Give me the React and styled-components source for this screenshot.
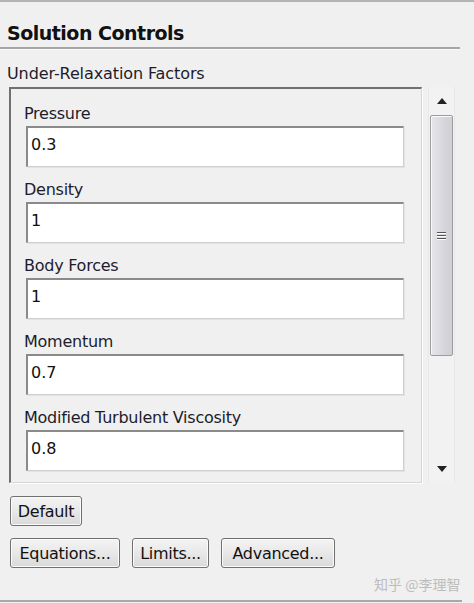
import React from "react";
import styled, { createGlobalStyle } from "styled-components";

const Global = createGlobalStyle`
  html, body { margin: 0; padding: 0; background: #f0f0f0; }
  body { font-family: "DejaVu Sans", "Liberation Sans", sans-serif; }
`;

const Page = styled.div`
  position: relative;
  width: 474px;
  height: 603px;
  overflow: hidden;
  background: #f0f0f0;
  border-top: 2px solid #b4b4b4;
  box-sizing: border-box;
`;

const Title = styled.h1`
  margin: 0;
  padding: 19px 0 0 7px;
  height: 45px;
  box-sizing: border-box;
  font-size: 19px;
  line-height: 24px;
  font-weight: bold;
  color: #111;
  letter-spacing: -0.5px;
`;

const Rule = styled.div`
  width: 460px;
  height: 2px;
  background: #a6a6a6;
  border-bottom: 1px solid #fafafa;
`;

const GroupLabel = styled.div`
  margin: 14px 0 0 7px;
  font-size: 16px;
  line-height: 20px;
  color: #1c1c2c;
  letter-spacing: -0.1px;
`;

const ScrollRow = styled.div`
  display: flex;
  gap: 6px;
  margin: 3px 0 0 9px;
  height: 396px;
`;

const Panel = styled.div`
  width: 413px;
  box-sizing: border-box;
  border-top: 2px solid #707070;
  border-left: 2px solid #707070;
  border-right: 1px solid #d6d6d6;
  border-bottom: 1px solid #d6d6d6;
  box-shadow: 1px 1px 0 #fdfdfd;
  padding: 15px 0 0 12px;
  overflow: hidden;
  display: flex;
  flex-direction: column;
  gap: 13px;
`;

const Field = styled.div`
  display: flex;
  flex-direction: column;
  gap: 2px;
`;

const Label = styled.div`
  font-size: 16px;
  line-height: 20px;
  height: 20px;
  color: #1c1c2c;
  letter-spacing: -0.25px;
  padding-left: 1px;
`;

const Input = styled.div`
  margin-left: 3px;
  width: 378px;
  height: 41px;
  box-sizing: border-box;
  background: #fff;
  border-top: 2px solid #8a8a8a;
  border-left: 2px solid #8a8a8a;
  border-right: 1px solid #cfcfcf;
  border-bottom: 1px solid #cfcfcf;
  box-shadow: 1px 1px 0 #e2e2e2;
  padding: 6px 0 0 3px;
  font-size: 16px;
  line-height: 22px;
  color: #111;
`;

const Scrollbar = styled.div`
  width: 25px;
  display: flex;
  flex-direction: column;
  align-items: center;
  background: #f2f2f2;
  border-left: 1px solid #e8e8e8;
  border-right: 1px solid #e8e8e8;
`;

const Arrow = styled.div`
  height: 28px;
  width: 100%;
  display: flex;
  align-items: center;
  justify-content: center;
  flex: none;
`;

const Thumb = styled.div`
  width: 23px;
  height: 241px;
  box-sizing: border-box;
  border: 1px solid #9c9c9c;
  border-radius: 2px;
  background: linear-gradient(to right, #e6e6ea, #d6d6dc 60%, #cfcfd4);
  box-shadow: inset 1px 1px 0 #fafafa;
  display: flex;
  align-items: center;
  justify-content: center;
`;

const Grip = styled.div`
  display: flex;
  flex-direction: column;
  gap: 2px;
  & > span {
    display: block;
    width: 9px;
    height: 1px;
    background: #555;
    box-shadow: 0 1px 0 #fff;
  }
`;

const Spacer = styled.div`
  flex: 1;
`;

const ButtonRow = styled.div`
  display: flex;
  gap: 12px;
  margin: ${(p) => p.$top}px 0 0 10px;
`;

const Button = styled.button`
  height: 30px;
  width: ${(p) => p.$w}px;
  box-sizing: border-box;
  border: 1px solid #707070;
  border-radius: 3px;
  background: linear-gradient(#f4f4f4, #e8e8e8 50%, #d9d9d9);
  box-shadow: inset 0 0 0 1px #fbfbfb;
  font-family: "DejaVu Sans", sans-serif;
  font-size: 16px;
  letter-spacing: -0.3px;
  color: #111;
  padding: 0;
`;

const Watermark = styled.div`
  position: absolute;
  left: 374px;
  top: 571px;
  font-family: "Noto Sans CJK SC", sans-serif;
  font-size: 14px;
  line-height: 22px;
  color: #bdbdbd;
  white-space: nowrap;
`;

const BottomRule = styled.div`
  position: absolute;
  left: 0;
  bottom: 1px;
  width: 462px;
  height: 2px;
  background: #a8a8a8;
`;

const fields = [
  ["Pressure", "0.3"],
  ["Density", "1"],
  ["Body Forces", "1"],
  ["Momentum", "0.7"],
  ["Modified Turbulent Viscosity", "0.8"],
];

export default function App() {
  return (
    <Page>
      <Global />
      <Title>Solution Controls</Title>
      <Rule />
      <GroupLabel>Under-Relaxation Factors</GroupLabel>
      <ScrollRow>
        <Panel>
          {fields.map(([l, v]) => (
            <Field key={l}>
              <Label>{l}</Label>
              <Input>{v}</Input>
            </Field>
          ))}
        </Panel>
        <Scrollbar>
          <Arrow>
            <svg width="10" height="6" viewBox="0 0 10 6"><path d="M0 6 L5 0 L10 6 Z" fill="#222" /></svg>
          </Arrow>
          <Thumb>
            <Grip><span /><span /><span /></Grip>
          </Thumb>
          <Spacer />
          <Arrow>
            <svg width="10" height="6" viewBox="0 0 10 6"><path d="M0 0 L5 6 L10 0 Z" fill="#222" /></svg>
          </Arrow>
        </Scrollbar>
      </ScrollRow>
      <ButtonRow $top={13}>
        <Button $w={72}>Default</Button>
      </ButtonRow>
      <ButtonRow $top={12}>
        <Button $w={110}>Equations...</Button>
        <Button $w={77}>Limits...</Button>
        <Button $w={114}>Advanced...</Button>
      </ButtonRow>
      <Watermark>知乎 @李理智</Watermark>
      <BottomRule />
    </Page>
  );
}
